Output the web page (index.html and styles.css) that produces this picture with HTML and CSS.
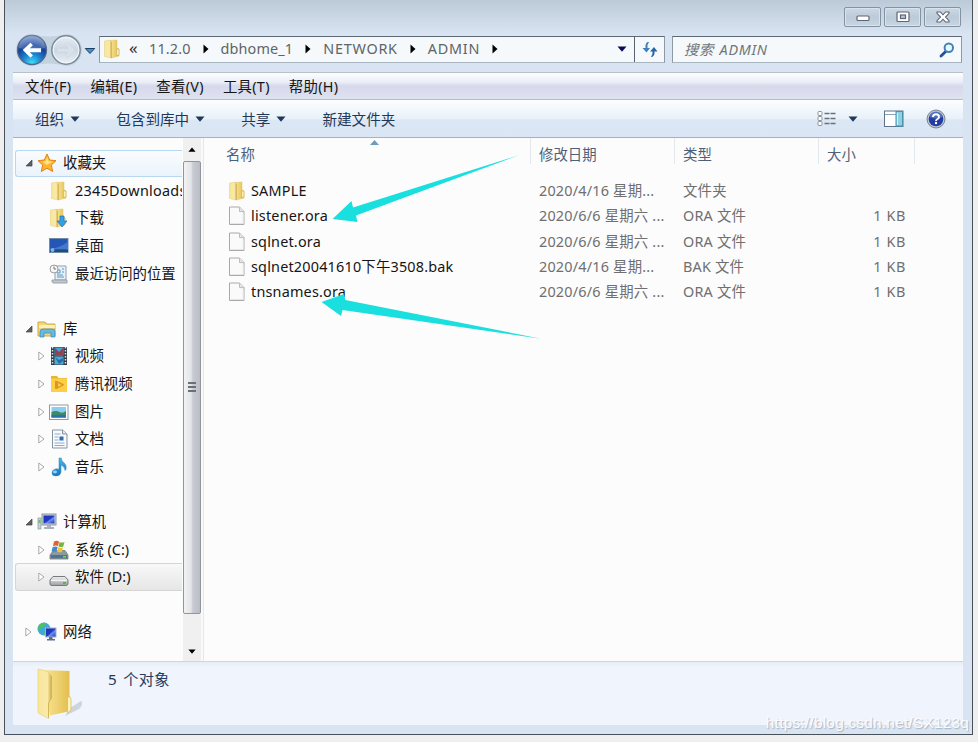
FILE: index.html
```html
<!DOCTYPE html>
<html lang="zh-CN">
<head>
    <meta charset="UTF-8">
    <title>ADMIN</title>
    <link rel="stylesheet" href="styles.css">
</head>
<body>
    <!-- shared icons -->
    <svg class="defs" width="0" height="0">
        <defs>
            <linearGradient id="gFolder" x1="0" x2="1"><stop offset="0" stop-color="#fbeaa0"/><stop offset="1" stop-color="#e3bd4c"/></linearGradient>
            <linearGradient id="gFront" x1="0" x2="1"><stop offset="0" stop-color="#f8e698"/><stop offset=".7" stop-color="#f9eaa9"/><stop offset="1" stop-color="#cfac46"/></linearGradient>
            <radialGradient id="gBack" cx=".5" cy=".95" r=".95"><stop offset="0" stop-color="#3fe0fa"/><stop offset=".35" stop-color="#1c80cc"/><stop offset=".65" stop-color="#143f96"/><stop offset="1" stop-color="#7f9fd6"/></radialGradient>
            <linearGradient id="gForward" x1="0" x2="0" y1="0" y2="1"><stop offset="0" stop-color="#e6edf4"/><stop offset=".5" stop-color="#ccd7e2"/><stop offset="1" stop-color="#e9f1f8"/></linearGradient>
            <linearGradient id="gScreen" x1="0" x2="1" y1="0" y2="1"><stop offset="0" stop-color="#1b35ae"/><stop offset=".5" stop-color="#2338c8"/><stop offset=".6" stop-color="#6c92ed"/><stop offset="1" stop-color="#1b33b4"/></linearGradient>
            <linearGradient id="gBlue" x1="0" x2="0" y1="0" y2="1"><stop offset="0" stop-color="#4bb6ea"/><stop offset="1" stop-color="#1675bd"/></linearGradient>
            <linearGradient id="gDrive" x1="0" x2="0" y1="0" y2="1"><stop offset="0" stop-color="#f1f1f1"/><stop offset="1" stop-color="#9c9fa1"/></linearGradient>
            <symbol id="folder" viewBox="0 0 18 20">
                <path d="M6 1.5 14 1v8l2 1v7l-8 2z" fill="url(#gFolder)" stroke="#dfc468" stroke-width=".5"/>
                <path d="M1.500 2 7 1.2 8.500 3v16l-7-1.500z" fill="url(#gFront)" stroke="#e2ca7a" stroke-width=".5"/>
                <path d="M8.5 3v16" stroke="#cfae4e" stroke-width=".6"/>
                <path d="M13.5 10h2.500v6l-2.500.6z" fill="#fff0b4" stroke="#c9a748" stroke-width=".6"/>
            </symbol>
            <symbol id="file" viewBox="0 0 18 20">
                <path d="M1.5 1h10L16 5.5v13H1.500z" fill="#fafafa" stroke="#a9a9a9"/>
                <path d="M11.500 1v4.6H16" fill="#e4e4e4" stroke="#bcbcbc"/>
                <path d="M2.5 17.500h12.700V8" fill="none" stroke="#e6e6e6"/>
            </symbol>
            <symbol id="open" viewBox="0 0 8 8"><path d="M7 1v6H1z" fill="#606060" stroke="#444" stroke-width=".7"/></symbol>
            <symbol id="closed" viewBox="0 0 7 10"><path d="M.8 1v8L6 5z" fill="#fff" stroke="#a8a8a8"/></symbol>
            <symbol id="down" viewBox="0 0 10 6"><path d="M.5.5h9L5 5.7z"/></symbol>
            <symbol id="right" viewBox="0 0 6 10"><path d="M.5.5 5.5 5l-5 4.5z"/></symbol>
        </defs>
    </svg>

    <div class="window">
        <div class="titlebar">
            <button class="win-btn" aria-label="Minimize"><svg width="14" height="12"><rect x="1" y="5" width="12" height="4.5" rx="1" fill="#fff" stroke="#5e6673" stroke-width="1.2"/></svg></button>
            <button class="win-btn" aria-label="Maximize"><svg width="14" height="12"><rect x="1" y="1" width="12" height="9.5" rx="1" fill="#fff" stroke="#5e6673" stroke-width="1.2"/><rect x="4.5" y="4" width="5" height="3.5" fill="#b8c7d6" stroke="#5e6673" stroke-width="1.2"/></svg></button>
            <button class="win-btn" aria-label="Close"><svg width="14" height="12"><path d="M1 1h3.4L7 3.8 9.6 1H13v1.4L9.5 6l3.5 3.6V11H9.6L7 8.2 4.4 11H1V9.6L4.5 6 1 2.4z" fill="#fff" stroke="#5e6673" stroke-width="1.1"/></svg></button>
        </div>

        <div class="nav">
            <svg class="nav-buttons" width="84" height="34" viewBox="0 0 84 34">
                <path d="M19 1q17 5 34 0a16 16 0 0 1 0 32q-17-5-34 0a16 16 0 0 1 0-32z" fill="#b9c7d6" opacity=".65"/>
                <circle cx="19" cy="17" r="14.5" fill="url(#gBack)" stroke="#53698f" stroke-width="1.3"/>
                <path d="M6 15a13 13 0 0 1 26 0q-13 4-26 0z" fill="#fff" opacity=".2"/>
                <path d="M9.8 17 17.5 9.7l2.4 2.5-3.1 3H28v4H16.8l3.1 3-2.4 2.6z" fill="#fff"/>
                <circle cx="53" cy="17" r="14.2" fill="url(#gForward)" stroke="#7b8896" stroke-width="1.4"/>
                <circle cx="53" cy="17" r="12.8" fill="none" stroke="#f2f7fb" stroke-width="1"/>
                <path d="M62 17 54.5 9.7l-2.4 2.5 3.1 3H44v4h11.2l-3.1 3 2.4 2.6z" fill="#d9e1ea" stroke="#cbd4de" stroke-width=".6"/>
                <path d="M72.3 15.500h9.4L77 20.500z" fill="#3f94c0" stroke="#1d3f68"/>
            </svg>
            <div class="address">
                <svg width="18" height="20"><use href="#folder"/></svg>
                <span class="chevrons">«</span>
                <span class="crumb">11.2.0</span><svg width="6" height="10"><use href="#right"/></svg>
                <span class="crumb">dbhome_1</span><svg width="6" height="10"><use href="#right"/></svg>
                <span class="crumb caps">NETWORK</span><svg width="6" height="10"><use href="#right"/></svg>
                <span class="crumb caps">ADMIN</span><svg width="6" height="10"><use href="#right"/></svg>
                <svg class="history" width="10" height="6"><use href="#down"/></svg>
                <span class="refresh"><svg width="18" height="17" viewBox="0 0 18 17"><path d="M6.5 1Q4 2.500 4.500 7H1.500L5.500 11.500 9 7H6.500Q6 3.500 8 1z" fill="#3b82be"/><path d="M11 16q3-1.500 2.500-5.500h3L13 6 9 10.500h2.500q.500 3-1.500 5.500z" fill="#2866a7"/></svg></span>
            </div>
            <div class="search">
                <span>搜索 ADMIN</span>
                <svg width="16" height="16" viewBox="0 0 16 16"><path d="M7.200 9 2 14" stroke="#264f9a" stroke-width="2.800" stroke-linecap="round"/><circle cx="9.800" cy="5.800" r="4.200" fill="#e9f6fd" stroke="#3a82b8" stroke-width="2"/></svg>
            </div>
        </div>

        <div class="menubar">
            <span>文件(F)</span><span>编辑(E)</span><span>查看(V)</span><span>工具(T)</span><span>帮助(H)</span>
        </div>

        <div class="toolbar">
            <span>组织<svg width="10" height="6"><use href="#down"/></svg></span>
            <span>包含到库中<svg width="10" height="6"><use href="#down"/></svg></span>
            <span>共享<svg width="10" height="6"><use href="#down"/></svg></span>
            <span>新建文件夹</span>
            <div class="tools">
                <svg width="20" height="16" viewBox="0 0 20 16"><g fill="#fff" stroke="#8a929c"><rect x="1" y=".5" width="4" height="4" rx="1"/><rect x="1" y="5.500" width="4" height="4" rx="1"/><rect x="1" y="10.500" width="4" height="4" rx="1"/></g><path d="M7.500 2.500h11M7.500 7.500h11M7.500 12.500h11" stroke="#69717b" stroke-width="1.300" stroke-dasharray="5 1"/></svg>
                <svg class="view-arrow" width="10" height="6"><use href="#down"/></svg>
                <svg width="20" height="18" viewBox="0 0 20 18"><rect x=".5" y="1" width="18.500" height="15.500" fill="#fff" stroke="#5f7388"/><path d="M1 4.500h11" stroke="#8ba4b9"/><rect x="12" y="1.500" width="6.500" height="14.500" fill="#8ed0e4" stroke="#4e91ab"/><path d="M13.500 3v12" stroke="#d5f2fa"/></svg>
                <svg width="20" height="20" viewBox="0 0 20 20"><circle cx="10" cy="10" r="9" fill="#bfc4cf" stroke="#7d8390"/><circle cx="10" cy="10" r="7.300" fill="#213da5"/><path d="M3.500 8a6.600 6.600 0 0 1 13 0q-6.500 3-13 0z" fill="#7f9fe0" opacity=".5"/><path d="M7 8q0-2.700 3-2.700T13 8q0 1.300-1.500 2-1.500.7-1.500 2" fill="none" stroke="#fff" stroke-width="1.900"/><circle cx="10" cy="14" r="1.200" fill="#fff"/></svg>
            </div>
        </div>

        <div class="content">
            <div class="sidebar">
                <div class="row top hot"><svg class="tw" width="8" height="8"><use href="#open"/></svg>
                    <svg width="20" height="20" viewBox="0 0 20 20"><path d="m10 1 2.700 6 6.300.7-4.700 4.300 1.400 6.500L10 15.200 4.300 18.500 5.700 12 1 7.700 7.300 7z" fill="#ffb62e" stroke="#e0811b"/><path d="m10 4 1.700 4.200 4 .6-6 3-4-3 3-.6z" fill="#ffe486"/></svg>
                    <span>收藏夹</span></div>
                <div class="row sub"><svg width="18" height="20"><use href="#folder"/></svg><span class="wide">2345Downloads</span></div>
                <div class="row sub"><svg width="20" height="20" viewBox="0 0 20 20"><use href="#folder" width="18" height="20"/><path d="M11 8h4v5h3l-5 6-5-6h3z" fill="#349fe2" stroke="#1d72b8" stroke-width=".7"/></svg><span>下载</span></div>
                <div class="row sub"><svg width="20" height="18" viewBox="0 0 20 18"><rect x=".5" y="1.500" width="18.500" height="14" fill="#2456b5" stroke="#6f8cab"/><path d="M1 12q9-1 18-7v7z" fill="#4479cf"/><path d="M1 13h18v2H1z" fill="#244a7c"/><circle cx="3.500" cy="13" r="2" fill="#74b7e8"/></svg><span>桌面</span></div>
                <div class="row sub"><svg width="20" height="20" viewBox="0 0 20 20"><path d="M6 2h11v14H6z" fill="#e7f0f7" stroke="#8ca2b4"/><path d="M3 16h15v3H4q-1.500-1-1-3z" fill="#c2cbd3" stroke="#8b949b" stroke-width=".8"/><path d="M8 6h3v3H8zm0 5h6m-1-6h2m-2 3h2m-7 5h7" fill="none" stroke="#5996bf"/><circle cx="5" cy="5" r="4" fill="#f6f6f6" stroke="#9d9d9d"/><path d="M5 2.500V5h2" fill="none" stroke="#777"/></svg><span>最近访问的位置</span></div>

                <div class="row top gap"><svg class="tw" width="8" height="8"><use href="#open"/></svg>
                    <svg width="20" height="20" viewBox="0 0 20 20"><path d="M1 3h7l1.500 2H18v12H1z" fill="#f2d675" stroke="#cda94a"/><path d="M2 6h16v3H2z" fill="#fff1b5"/><path d="M3 18v-5q0-3 3-3h9q3 0 3 3v5h-4v-4H7v4z" fill="#66b9e4" stroke="#3a86b6" stroke-width=".7"/></svg>
                    <span>库</span></div>
                <div class="row sub"><svg class="tw" width="7" height="10"><use href="#closed"/></svg><svg width="18" height="20" viewBox="0 0 18 20"><rect x="1" y="1" width="16" height="18" fill="#333c46"/><path d="M2.500 1v18M15.500 1v18" stroke="#dfe5e9" stroke-width="1.500" stroke-dasharray="1.500 1.500"/><rect x="4.500" y="1.500" width="9" height="8" fill="#4c9fd2"/><rect x="4.500" y="10.500" width="9" height="8" fill="#4aaade"/><path d="m5 2 4 4 4-4v7H5z" fill="#8f4352"/><path d="m5 11 4 3 4-2v3l-4 3z" fill="#2b6da0"/></svg><span>视频</span></div>
                <div class="row sub"><svg class="tw" width="7" height="10"><use href="#closed"/></svg><svg width="18" height="18" viewBox="0 0 18 18"><path d="M1 1h6l1.500 2H17v14H1z" fill="#e9b52c"/><rect x="1" y="3.500" width="16" height="13.500" fill="#fdcf48"/><path d="M5 6.500q0-1.500 1.500-.8l7 3.300q1 .8 0 1.600l-7 3.300Q5 14.500 5 13z" fill="#dc981b"/><path d="m8.200 8 3.300 2-3.300 2z" fill="#fbd15a"/></svg><span>腾讯视频</span></div>
                <div class="row sub"><svg class="tw" width="7" height="10"><use href="#closed"/></svg><svg width="20" height="18" viewBox="0 0 20 18"><rect x=".5" y="2" width="18.500" height="14.500" fill="#fff" stroke="#8c9aa5"/><rect x="2.500" y="4" width="14.500" height="10.500" fill="#8cceef"/><path d="M2.500 9q5-2 8 0t6.500-1v6.500H2.500z" fill="#3c8a69"/><path d="M2.500 12h14.500v2.500H2.500z" fill="#2774ad"/></svg><span>图片</span></div>
                <div class="row sub"><svg class="tw" width="7" height="10"><use href="#closed"/></svg><svg width="18" height="20" viewBox="0 0 18 20"><path d="M2.500 1h10L17 5v14H2.500z" fill="#f8fbfe" stroke="#8593a1"/><path d="M12.500 1v4H17" fill="#dce7ef" stroke="#8593a1"/><path d="M4.500 5h6m-6 3h4m-4 3h4m-4 3h10m-10 2.500h10" stroke="#8dabd0"/><rect x="9.500" y="7.500" width="4" height="4" fill="#356bac"/></svg><span>文档</span></div>
                <div class="row sub"><svg class="tw" width="7" height="10"><use href="#closed"/></svg><svg width="18" height="20" viewBox="0 0 18 20"><path d="M9 1h2.200q.3 3 3 5t1.800 6.500l-1 1q0-4-4-5.500V15q-.5 4-5 4-4 0-4-3t3.500-4q2-.5 3.500.3z" fill="url(#gBlue)" stroke="#2986c3" stroke-width=".5"/><ellipse cx="5" cy="15" rx="2" ry="1.400" fill="#8ed6f8"/></svg><span>音乐</span></div>

                <div class="row top gap"><svg class="tw" width="8" height="8"><use href="#open"/></svg>
                    <svg width="20" height="18" viewBox="0 0 20 18"><rect x="1" y="5" width="3" height="11" fill="#c5d2cf" stroke="#879b99" stroke-width=".7"/><path d="M1.500 7h2v3h-2z" fill="#6bbf6b"/><rect x="5" y="1" width="14" height="11" fill="#cad0dc" stroke="#8b94a8"/><rect x="6.500" y="2.500" width="11" height="8" fill="url(#gScreen)"/><path d="M10 12h4v2h3v2H7v-2h3z" fill="#a9b2bb"/></svg>
                    <span>计算机</span></div>
                <div class="row sub"><svg class="tw" width="7" height="10"><use href="#closed"/></svg><svg width="20" height="20" viewBox="0 0 20 20"><path d="m4 11 12-.5 3 4.500v4H1v-4z" fill="#8d99a1" stroke="#626c73" stroke-width=".7"/><path d="M2 15h16v3H2z" fill="#477796"/><path d="M14 16h3v1.500h-3z" fill="#6fdc55"/><path d="M5 1.500q3-1.300 5 0L9 6Q7 5 4 6z" fill="#e26031"/><path d="M10.500 2q2.500 1.200 5 0l-1.200 4.500q-2.300 1-4.800 0z" fill="#75b442"/><path d="M3.700 7q3-1 5 0l-1.200 4.500q-2-1-5 0z" fill="#4088d1"/><path d="M9.300 7.300q2.500 1.200 4.800 0l-1.200 4.500q-2.300 1-4.800 0z" fill="#f3c138"/></svg><span>系统 (C:)</span></div>
                <div class="row sub selected"><svg class="tw" width="7" height="10"><use href="#closed"/></svg><svg width="20" height="20" viewBox="0 0 20 20"><path d="M4 9.500h12l3 3.500v4q-.5 1.500-2 1.500H3Q1 18.500 1 17v-4z" fill="url(#gDrive)" stroke="#777b7e"/><path d="M2 13.300h16" stroke="#fff"/><path d="M14 15h3v2h-3z" fill="#55b64a"/></svg><span>软件 (D:)</span></div>

                <div class="row top gap"><svg class="tw" width="7" height="10"><use href="#closed"/></svg>
                    <svg width="20" height="20" viewBox="0 0 20 20"><circle cx="7" cy="7" r="6.500" fill="#40a8dd"/><path d="M2 3q3-3 7-2L7 5 4 6 3 9Q0 7 2 3zm6 4 5 1-3 5H7z" fill="#4dc065"/><rect x="8.500" y="6" width="10.500" height="9" fill="url(#gScreen)" stroke="#a5b4ce"/><path d="M12 15h3.500v2H18v1.500h-8V17h2z" fill="#5c6d8b"/></svg>
                    <span>网络</span></div>
            </div>

            <div class="scrollbar">
                <svg class="scroll-arrow" width="8" height="5" viewBox="0 0 10 6"><path d="M.5 5.700h9L5 .5z"/></svg>
                <div class="thumb"><i></i><i></i><i></i></div>
                <svg class="scroll-arrow" width="8" height="5"><use href="#down"/></svg>
            </div>

            <div class="files">
                <div class="cols head">
                    <span>名称</span><span>修改日期</span><span>类型</span><span>大小</span>
                    <svg class="sort" width="9" height="5" viewBox="0 0 9 5"><path d="M0 5 4.500 0 9 5z" fill="#6f9cba"/></svg>
                </div>
                <div class="cols"><span class="name"><svg width="18" height="20"><use href="#folder"/></svg>SAMPLE</span><span>2020/4/16 星期...</span><span>文件夹</span><span class="size"></span></div>
                <div class="cols"><span class="name"><svg width="18" height="20"><use href="#file"/></svg>listener.ora</span><span>2020/6/6 星期六 ...</span><span>ORA 文件</span><span class="size">1 KB</span></div>
                <div class="cols"><span class="name"><svg width="18" height="20"><use href="#file"/></svg>sqlnet.ora</span><span>2020/6/6 星期六 ...</span><span>ORA 文件</span><span class="size">1 KB</span></div>
                <div class="cols"><span class="name"><svg width="18" height="20"><use href="#file"/></svg>sqlnet20041610下午3508.bak</span><span>2020/4/16 星期...</span><span>BAK 文件</span><span class="size">1 KB</span></div>
                <div class="cols"><span class="name"><svg width="18" height="20"><use href="#file"/></svg>tnsnames.ora</span><span>2020/6/6 星期六 ...</span><span>ORA 文件</span><span class="size">1 KB</span></div>
            </div>
        </div>

        <div class="details">
            <svg width="50" height="56" viewBox="0 0 50 56">
                <path d="m34 40 11-7q3 3-2 8l-14 7z" fill="#9ba4b0" opacity=".4"/>
                <path d="M5 2 33.500 3v25l1 2v13L14 47.500z" fill="url(#gFolder)"/>
                <path d="M2 1q12 2 13.500 7v22l-3 5v15.500L2 45z" fill="url(#gFront)" stroke="#e4cc78" stroke-width=".6"/>
                <path d="M15.500 8v22l-3 5v15" fill="none" stroke="#cfae4a" stroke-width=".8"/>
                <path d="M31.500 29q3.500-1 3.500 3v10l-3.500 3z" fill="#fff4bf" stroke="#d5b858" stroke-width=".7"/>
            </svg>
            <span>5 个对象</span>
        </div>
    </div>

    <!-- pointers at listener.ora and tnsnames.ora -->
    <svg class="arrows" width="978" height="742">
        <path d="M332.500 219 351.500 201l1.500 6.500L519.500 155 356 215.500l1.500 6.500z"/>
        <path d="M321.500 302 344 294l1.300 6L541 338.700 342.500 310l-1.500 6z"/>
    </svg>
    <div class="watermark">https://blog.csdn.net/SX123q</div>
</body>
</html>
```

FILE: styles.css
```css
* {
    box-sizing: border-box;
}
body {
    margin: 0;
    width: 978px;
    height: 742px;
    overflow: hidden;
    background: #efefef;
    font-family: "Noto Sans", "Noto Sans CJK SC", sans-serif;
    font-size: 14.4px;
    line-height: 20px;
    color: #151515;
    white-space: nowrap;
}
svg {
    flex: none;
    display: block;
}
.defs {
    position: absolute;
}
.window {
    display: flex;
    flex-direction: column;
    width: 969px;
    height: 735px;
    margin-left: 4px;
    padding: 0 9px 9px 8px;
    border: 1px solid #48515a;
    border-top: none;
    background: linear-gradient(#bccad8, #d8e4f1 34px, #d8e4f1);
}
.titlebar {
    display: flex;
    justify-content: flex-end;
    gap: 3px;
    height: 36px;
    padding: 7px 2px 0 0;
}
.win-btn {
    display: flex;
    align-items: center;
    justify-content: center;
    width: 37px;
    height: 20px;
    padding: 0;
    border: 1px solid #8493a4;
    border-radius: 2px;
    background: linear-gradient(#ccd8e4, #bccbd9 50%, #c8d5e2);
    box-shadow: inset 0 0 0 1px #d9e3ed;
}

/* address row */
.nav {
    display: flex;
    height: 27px;
    margin-bottom: 9px;
    padding-right: 1px;
}
.nav-buttons {
    margin: -3px 2px 0 0;
}
.address,
.search {
    display: flex;
    align-items: center;
    padding-bottom: 1px;
    border: 1px solid #6e7a86;
    border-color: #5d6974 #8d99a5 #a9b5c1;
    background: #f5f9fb;
    color: #606467;
}
.address {
    width: 566px;
    padding-left: 3px;
}
.chevrons {
    width: 16px;
    margin: -3px 4px 0 8px;
    font-size: 17px;
    color: #333;
}
.crumb {
    margin-right: 12px;
    letter-spacing: .15px;
}
.crumb + svg {
    margin-right: 12px;
}
.caps {
    letter-spacing: .75px;
}
.history {
    margin-left: auto;
    margin-right: 7px;
    fill: #0a0a55;
}
.refresh {
    display: flex;
    align-items: center;
    justify-content: center;
    width: 30px;
    height: 26px;
    border-left: 1px solid #59636e;
}
.search {
    flex: 1;
    justify-content: space-between;
    margin-left: 7px;
    padding: 0 6px 0 11px;
    font-style: italic;
    letter-spacing: .7px;
    word-spacing: 1px;
    color: #737679;
}

.menubar {
    display: flex;
    align-items: center;
    gap: 19px;
    height: 28px;
    padding: 2px 0 0 12px;
    border-top: 1px solid #b9c0ca;
    border-bottom: 1px solid #b5bdca;
    background: linear-gradient(#fcfdfe, #ebeef7 35%, #d5d9ea 50%, #dfe2f0);
    letter-spacing: .3px;
}
.toolbar {
    display: flex;
    align-items: center;
    gap: 36px;
    height: 38px;
    padding-left: 22px;
    background: linear-gradient(#fcfeff, #e8f1fa 50%, #dce7f4 55%, #dae6f5);
    border-bottom: 1px solid #a5b2c2;
    font-size: 14.6px;
    color: #1e395b;
    fill: #1e395b;
}
.toolbar > span {
    display: flex;
    align-items: center;
    gap: 6px;
}
.tools {
    display: flex;
    align-items: center;
    margin-left: auto;
    padding-right: 17px;
}
.tools > svg + svg {
    margin-left: 22px;
}
.tools > .view-arrow {
    margin: 0 4px 0 11px;
}

.content {
    display: flex;
    flex: 1;
    min-height: 0;
    background: #fcfcfc;
}
.sidebar {
    width: 170px;
    padding: 11.5px 1px 0 0;
}
.row {
    display: flex;
    align-items: center;
    position: relative;
    height: 27.6px;
    margin-left: 2px;
    border: 1px solid transparent;
    border-right: none;
    border-radius: 3px 0 0 3px;
}
.row svg:not(.tw) {
    width: 20px;
}
.row span {
    margin-left: 6px;
    overflow: hidden;
}
.row.top {
    padding-left: 21px;
}
.row.sub {
    padding-left: 33px;
}
.row.gap {
    margin-top: 27.6px;
}
.tw {
    position: absolute;
    left: 9px;
}
.sub .tw {
    left: 22px;
}
.wide {
    letter-spacing: .25px;
}
.hot {
    border-color: #b9d7ee;
    background: linear-gradient(#fafcfe, #ebf3fb);
}
.selected {
    border-color: #d5d5d5;
    background: linear-gradient(#f8f8f8, #e6e6e6);
}
.scrollbar {
    display: flex;
    flex-direction: column;
    align-items: center;
    justify-content: space-between;
    width: 21px;
    padding: 9px 3px 7px 0;
    background: #f0f0f0;
    border-right: 1px solid #e3e8ed;
    box-shadow: inset -2px 0 #fafafa;
}
.thumb {
    display: flex;
    flex-direction: column;
    align-items: center;
    justify-content: center;
    gap: 2px;
    width: 18px;
    height: 453px;
    margin-bottom: 27px;
    border: 1px solid #92969b;
    border-radius: 2px;
    background: linear-gradient(90deg, #f3f3f4, #e2e3e7 45%, #c8cbd2 55%, #b9bdc6);
}
.thumb i {
    width: 8px;
    height: 2px;
    background: #6b7075;
}

/* file list */
.files {
    flex: 1;
}
.cols {
    display: grid;
    grid-template-columns: 327px 144px 144px 96px;
    align-items: center;
    height: 25.3px;
    letter-spacing: .2px;
    color: #6f6f6f;
}
.cols > span {
    padding-left: 8px;
}
.cols > .name {
    display: flex;
    align-items: center;
    gap: 5px;
    padding-left: 24px;
    color: #151515;
}
.cols > .size {
    padding: 0 9px 0 0;
    text-align: right;
    letter-spacing: .6px;
}
.head {
    position: relative;
    height: 26px;
    margin-bottom: 14.4px;
    letter-spacing: 0;
    color: #4c607a;
}
.head > span {
    height: 26px;
    padding-top: 7px;
    border-right: 1px solid #e3e8ee;
}
.head > span:first-child {
    padding-left: 22px;
}
.sort {
    position: absolute;
    left: 166px;
    top: 2px;
}

.details {
    display: flex;
    height: 64px;
    padding: 6px 0 0 23px;
    border-top: 1px solid #cbd6e3;
    background: linear-gradient(#e5edf6, #f0f4fc 5px);
    font-size: 15.2px;
    letter-spacing: .3px;
    word-spacing: 2px;
    color: #243b5e;
}
.details span {
    margin: 1px 0 0 22px;
}
.arrows {
    position: absolute;
    left: 0;
    top: 0;
    fill: #1adfdf;
}
.watermark {
    position: absolute;
    right: 9px;
    top: 713px;
    font-family: "Liberation Sans", sans-serif;
    font-size: 15.3px;
    letter-spacing: .27px;
    color: #fbfcfe;
    text-shadow: 1px 1px 1px #a9b3c0;
}
```
